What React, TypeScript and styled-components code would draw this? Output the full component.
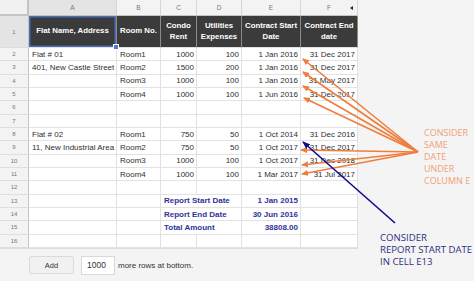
import React from 'react';
import styled, { createGlobalStyle } from 'styled-components';

const GlobalStyle = createGlobalStyle`
  html, body { margin: 0; padding: 0; background: #f4f4f4; }
  body { font-family: "Liberation Sans", Arial, sans-serif; }
`;

const Page = styled.div`
  position: relative;
  width: 474px;
  height: 281px;
  overflow: hidden;
  background: #f4f4f4;
`;

const Sheet = styled.div`
  display: grid;
  grid-template-columns: 29px 88px 44px 36px 45px 59px 57px;
  grid-template-rows: 16px 32px repeat(15, 1fr);
  width: 358px;
  height: 248px;
  background: #fff;
`;

const Corner = styled.div`
  background: #f1f1f1;
  border-right: 2px solid #c4c4c4;
  border-bottom: 2px solid #c4c4c4;
`;

const ColHead = styled.div<{ $active?: boolean }>`
  position: relative;
  display: flex;
  align-items: center;
  justify-content: center;
  background: ${p => (p.$active ? '#e4e4e4' : '#f3f3f3')};
  color: #777;
  font-size: 6.5px;
  border-right: 1px solid #d6d6d6;
  border-bottom: 1px solid #c4c4c4;
`;

const FilterMark = styled.span`
  position: absolute;
  right: 4px;
  top: 6px;
  width: 0;
  height: 0;
  border-top: 2.5px solid transparent;
  border-bottom: 2.5px solid transparent;
  border-right: 3px solid #222;
`;

const RowHead = styled.div<{ $active?: boolean }>`
  display: flex;
  align-items: center;
  justify-content: center;
  background: ${p => (p.$active ? '#e4e4e4' : '#f3f3f3')};
  color: #777;
  font-size: 6px;
  border-right: 1px solid #c4c4c4;
  border-bottom: 1px solid #dedede;
`;

const TitleCell = styled.div<{ $selected?: boolean }>`
  position: relative;
  display: flex;
  align-items: center;
  justify-content: center;
  text-align: center;
  padding: 0 1px;
  background: #3b3b3b;
  color: #fff;
  font-weight: bold;
  font-size: 7.8px;
  line-height: 10.5px;
  border-right: 1px solid #8a8a8a;
  border-bottom: 1px solid #e2e2e2;
  box-shadow: ${p => (p.$selected ? 'inset 0 0 0 1.5px #4c6db0' : 'none')};

  &::after {
    content: '';
    display: ${p => (p.$selected ? 'block' : 'none')};
    position: absolute;
    right: -3px;
    bottom: -3px;
    width: 4px;
    height: 4px;
    background: #4c7bd6;
    border: 1px solid #fff;
    z-index: 2;
  }
`;

const Cell = styled.div<{ $align?: 'left' | 'right'; $report?: boolean; $span?: number }>`
  display: flex;
  align-items: center;
  justify-content: ${p => (p.$align === 'right' ? 'flex-end' : 'flex-start')};
  grid-column: ${p => (p.$span ? `span ${p.$span}` : 'auto')};
  padding: 0 2px 0 3px;
  white-space: nowrap;
  overflow: visible;
  font-size: 8px;
  font-weight: ${p => (p.$report ? 'bold' : 'normal')};
  color: ${p => (p.$report ? '#30329a' : '#2f2f2f')};
  border-right: 1px solid #e2e2e2;
  border-bottom: 1px solid #e2e2e2;
`;

const Footer = styled.div`
  display: flex;
  align-items: center;
  width: 358px;
  height: 33px;
  padding-left: 29px;
  box-sizing: border-box;
  border-top: 1px solid #dcdcdc;
  font-size: 8px;
  color: #333;
`;

const AddButton = styled.div`
  display: flex;
  align-items: center;
  justify-content: center;
  width: 45px;
  height: 18px;
  box-sizing: border-box;
  background: #f1f1f1;
  border: 1px solid #dadada;
  border-radius: 2px;
  font-size: 7.5px;
  color: #333;
`;

const CountBox = styled.div`
  display: flex;
  align-items: center;
  width: 34px;
  height: 19px;
  margin-left: 7px;
  padding-left: 5px;
  box-sizing: border-box;
  background: #fff;
  border: 1px solid #d9d9d9;
  font-size: 8.5px;
  color: #333;
`;

const FooterText = styled.span`
  margin-left: 3px;
`;

const Overlay = styled.svg`
  position: absolute;
  left: 0;
  top: 0;
  pointer-events: none;
`;

const Note = styled.div<{ $color: string; $left: number; $top: number; $size: number }>`
  position: absolute;
  left: ${p => p.$left}px;
  top: ${p => p.$top}px;
  font-family: "Open Sans", "Liberation Sans", sans-serif;
  font-size: ${p => p.$size}px;
  line-height: 12px;
  color: ${p => p.$color};
  white-space: nowrap;
`;

type Row = { a?: string; b?: string; c?: string; d?: string; e?: string; f?: string; report?: string; value?: string };

const rows: Row[] = [
  { a: 'Flat # 01', b: 'Room1', c: '1000', d: '100', e: '1 Jan 2016', f: '31 Dec 2017' },
  { a: '401, New Castle Street', b: 'Room2', c: '1500', d: '200', e: '1 Jan 2016', f: '31 Dec 2017' },
  { b: 'Room3', c: '1000', d: '100', e: '1 Jan 2016', f: '31 May 2017' },
  { b: 'Room4', c: '1000', d: '100', e: '1 Jun 2016', f: '31 Dec 2017' },
  {},
  {},
  { a: 'Flat # 02', b: 'Room1', c: '750', d: '50', e: '1 Oct 2014', f: '31 Dec 2016' },
  { a: '11, New Industrial Area', b: 'Room2', c: '750', d: '50', e: '1 Oct 2017', f: '31 Dec 2017' },
  { b: 'Room3', c: '1000', d: '100', e: '1 Oct 2017', f: '31 Dec 2018' },
  { b: 'Room4', c: '1000', d: '100', e: '1 Mar 2017', f: '31 Jul 2017' },
  {},
  { report: 'Report Start Date', value: '1 Jan 2015' },
  { report: 'Report End Date', value: '30 Jun 2016' },
  { report: 'Total Amount', value: '38808.00' },
  {},
];

const titles = ['Flat Name, Address', 'Room No.', 'Condo Rent', 'Utilities Expenses', 'Contract Start Date', 'Contract End date'];

const orangeTips: [number, number][] = [
  [303, 59], [303, 72], [303, 86], [304, 98], [301, 150], [302, 165], [302, 174],
];

const App = () => {
  return (
    <Page>
      <GlobalStyle />
      <Sheet>
        <Corner />
        {['A', 'B', 'C', 'D', 'E', 'F'].map(l => (
          <ColHead key={l} $active={l === 'A'}>
            {l}
            {l === 'F' && <FilterMark />}
          </ColHead>
        ))}
        <RowHead $active>1</RowHead>
        {titles.map((t, i) => (
          <TitleCell key={t} $selected={i === 0}>{t}</TitleCell>
        ))}
        {rows.map((r, i) => (
          <React.Fragment key={i}>
            <RowHead>{i + 2}</RowHead>
            <Cell>{r.a}</Cell>
            <Cell>{r.b}</Cell>
            {r.report ? (
              <Cell $span={2} $report>{r.report}</Cell>
            ) : (
              <>
                <Cell $align="right">{r.c}</Cell>
                <Cell $align="right">{r.d}</Cell>
              </>
            )}
            <Cell $align="right" $report={!!r.report}>{r.report ? r.value : r.e}</Cell>
            <Cell $align="right">{r.f}</Cell>
          </React.Fragment>
        ))}
      </Sheet>
      <Footer>
        <AddButton>Add</AddButton>
        <CountBox>1000</CountBox>
        <FooterText>more rows at bottom.</FooterText>
      </Footer>

      <Overlay width={474} height={281} viewBox="0 0 474 281">
        <defs>
          <marker id="headOrange" markerWidth="7" markerHeight="6" refX="6" refY="3" orient="auto" markerUnits="userSpaceOnUse">
            <path d="M0,0 L7,3 L0,6 Z" fill="#ee7e3e" />
          </marker>
          <marker id="headBlue" markerWidth="8" markerHeight="6" refX="7" refY="3" orient="auto" markerUnits="userSpaceOnUse">
            <path d="M0,0 L8,3 L0,6 Z" fill="#0c0c8e" />
          </marker>
        </defs>
        {orangeTips.map(([x, y], i) => (
          <line key={i} x1={418} y1={152} x2={x} y2={y} stroke="#ee7e3e" strokeWidth={1.6} markerEnd="url(#headOrange)" />
        ))}
        <line x1={395} y1={223} x2={303} y2={142} stroke="#0c0c8e" strokeWidth={1.6} markerEnd="url(#headBlue)" />
      </Overlay>

      <Note $color="#f0a276" $left={424} $top={127} $size={9}>
        CONSIDER<br />SAME<br />DATE<br />UNDER<br />COLUMN E
      </Note>
      <Note $color="#2e2f7e" $left={380} $top={232} $size={9.6}>
        CONSIDER<br />REPORT START DATE<br />IN CELL E13
      </Note>
    </Page>
  );
};

export default App;
